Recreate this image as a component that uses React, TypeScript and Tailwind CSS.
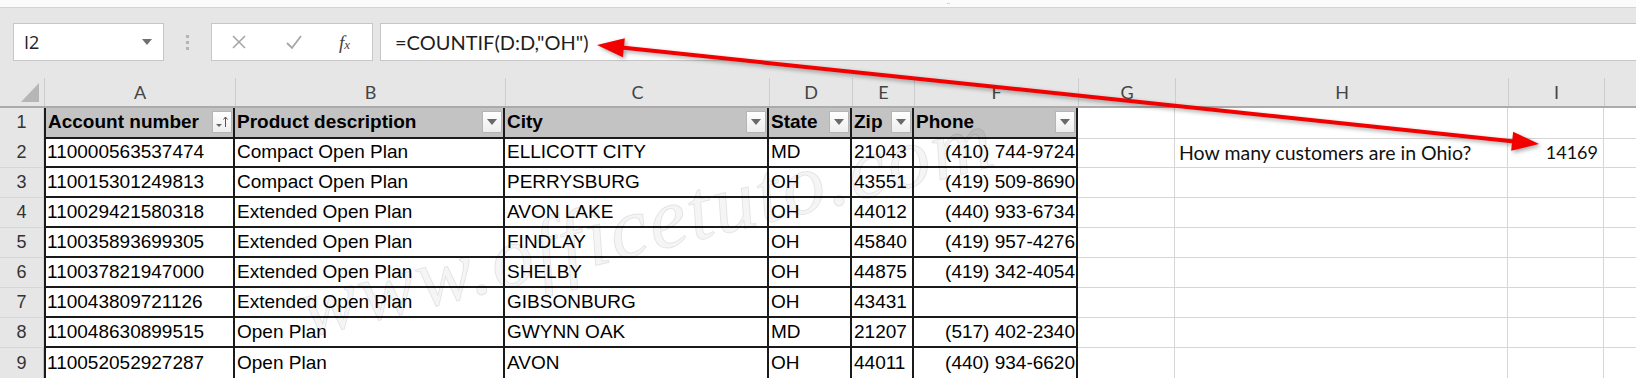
import React from 'react'

const cols = ['', 'A', 'B', 'C', 'D', 'E', 'F', 'G', 'H', 'I', '']

const headers = ['Account number', 'Product description', 'City', 'State', 'Zip', 'Phone']

const rows = [
  ['110000563537474', 'Compact Open Plan', 'ELLICOTT CITY', 'MD', '21043', '(410) 744-9724'],
  ['110015301249813', 'Compact Open Plan', 'PERRYSBURG', 'OH', '43551', '(419) 509-8690'],
  ['110029421580318', 'Extended Open Plan', 'AVON LAKE', 'OH', '44012', '(440) 933-6734'],
  ['110035893699305', 'Extended Open Plan', 'FINDLAY', 'OH', '45840', '(419) 957-4276'],
  ['110037821947000', 'Extended Open Plan', 'SHELBY', 'OH', '44875', '(419) 342-4054'],
  ['110043809721126', 'Extended Open Plan', 'GIBSONBURG', 'OH', '43431', ''],
  ['110048630899515', 'Open Plan', 'GWYNN OAK', 'MD', '21207', '(517) 402-2340'],
  ['110052052927287', 'Open Plan', 'AVON', 'OH', '44011', '(440) 934-6620'],
]

const gridCols = 'grid grid-cols-[44px_191px_270px_264px_83px_62px_164px_97px_333px_96px_1fr]'

function FilterButton({ sorted }: { sorted?: boolean }) {
  return (
    <span className="mr-[1px] flex h-[22px] w-[20px] shrink-0 items-center justify-center border border-[#b5b5b5] bg-gradient-to-b from-white to-[#eeeeee]">
      {sorted ? (
        <svg width="14" height="14" viewBox="0 0 14 14">
          <path d="M1 9h6l-3 3z" fill="#666" />
          <path d="M10.5 2v10" stroke="#555" strokeWidth="1" />
          <path d="M8.5 4.5l2-2.5 2 2.5" stroke="#555" strokeWidth="1" fill="none" />
        </svg>
      ) : (
        <svg width="10" height="6" viewBox="0 0 10 6">
          <path d="M0 0h10L5 6z" fill="#6a6a6a" />
        </svg>
      )}
    </span>
  )
}

function Toolbar() {
  return (
    <div className="font-['Open_Sans',sans-serif]">
      <div className="relative h-[8px] border-b border-[#d4d4d4] bg-[#fbfbfb]">
        <span className="absolute left-[946px] top-[1px] text-[8px] leading-none text-[#444]">¨</span>
      </div>
      <div className="flex h-[70px] items-start bg-[#e6e6e6] pl-[13px] pt-[15px]">
        <div className="flex h-[38px] w-[151px] items-center justify-between border border-[#c6c6c6] bg-white pl-[10px] pr-[11px]">
          <span className="text-[18px] text-[#222]">I2</span>
          <svg width="10" height="6" viewBox="0 0 10 6">
            <path d="M0 0h10L5 6z" fill="#707070" />
          </svg>
        </div>
        <div className="flex h-[38px] w-[47px] flex-col items-center justify-center gap-[3px]">
          <span className="h-[3px] w-[3px] bg-[#b4b4b4]" />
          <span className="h-[3px] w-[3px] bg-[#b4b4b4]" />
          <span className="h-[3px] w-[3px] bg-[#b4b4b4]" />
        </div>
        <div className="flex h-[38px] w-[162px] items-center border border-[#c6c6c6] bg-white">
          <svg className="ml-[19px]" width="16" height="16" viewBox="0 0 16 16">
            <path d="M2 2l12 12M14 2L2 14" stroke="#a6a6a6" strokeWidth="1.6" />
          </svg>
          <svg className="ml-[38px]" width="18" height="16" viewBox="0 0 18 16">
            <path d="M2 9l5 5L16 2" stroke="#a6a6a6" strokeWidth="1.8" fill="none" />
          </svg>
          <span className="ml-[36px] font-['Liberation_Serif',serif] text-[19px] italic leading-none text-[#444]">
            f<span className="text-[13px]">x</span>
          </span>
        </div>
        <div className="ml-[7px] flex h-[38px] flex-1 items-center border-y border-l border-[#c6c6c6] bg-white pl-[14px]">
          <span className="font-['Lato',sans-serif] text-[20px] text-[#1e1e1e]">=COUNTIF(D:D,"OH")</span>
        </div>
      </div>
    </div>
  )
}

function ColumnHeaders() {
  return (
    <div className={`${gridCols} h-[30px] border-b-2 border-[#ababab] bg-[#e6e6e6] font-['Lato',sans-serif] text-[18px] text-[#444]`}>
      {cols.map((c, i) => (
        <div
          key={i}
          className={i === 0 ? 'relative' : 'flex items-center justify-center border-l border-[#cdcdcd]'}
        >
          {i === 0 ? (
            <svg className="absolute left-0 top-0" width="44" height="28" viewBox="0 0 44 28">
              <path d="M39 5v19H21z" fill="#b6b6b6" />
            </svg>
          ) : (
            c
          )}
        </div>
      ))}
    </div>
  )
}

function RowHeader({ n, last }: { n: number; last?: boolean }) {
  return (
    <div
      className={`flex items-center justify-center border-r border-[#c2c2c2] bg-[#e6e6e6] font-['Liberation_Sans',sans-serif] text-[18px] text-[#333] ${last ? '' : 'border-b border-[#d6d6d6]'}`}
    >
      {n}
    </div>
  )
}

function Grid() {
  return (
    <div className="font-['Liberation_Sans',Arial,sans-serif] text-[19px] text-black">
      {/* table header row */}
      <div className={`${gridCols} h-[30px]`}>
        <RowHeader n={1} />
        {headers.map((h, i) => (
          <div
            key={h}
            className={`flex items-center justify-between border-b-2 border-r-2 border-[#1a1a1a] bg-[#c3c3c3] pl-[2px] font-bold ${i === 0 ? 'border-l-2' : ''}`}
          >
            <span>{h}</span>
            <FilterButton sorted={i === 0} />
          </div>
        ))}
        <div className="border-b border-r border-[#d6d6d6]" />
        <div className="border-b border-r border-[#d6d6d6]" />
        <div className="border-b border-r border-[#d6d6d6]" />
        <div className="border-b border-[#d6d6d6]" />
      </div>

      {rows.map((r, ri) => {
        const last = ri === rows.length - 1
        const b = last ? '' : 'border-b-2'
        return (
          <div key={ri} className={`${gridCols} h-[30px]`}>
            <RowHeader n={ri + 2} last={last} />
            {r.map((v, ci) => (
              <div
                key={ci}
                className={`flex items-center overflow-hidden whitespace-nowrap border-r-2 border-[#1a1a1a] ${b} ${
                  ci === 0 ? 'border-l-2 pl-[1px]' : 'pl-[2px]'
                } ${ci === 5 ? 'justify-end pr-[1px]' : ''}`}
              >
                {v}
              </div>
            ))}
            <div className={`border-r border-[#d6d6d6] ${last ? '' : 'border-b'}`} />
            <div
              className={`flex items-center whitespace-nowrap border-r border-[#d6d6d6] pl-[4px] font-['Lato',sans-serif] text-[19.5px] text-[#111] ${last ? '' : 'border-b'}`}
            >
              {ri === 0 ? 'How many customers are in Ohio?' : ''}
            </div>
            <div
              className={`flex items-center justify-end border-r border-[#d6d6d6] pr-[5px] font-['Lato',sans-serif] text-[18px] text-[#111] ${last ? '' : 'border-b'}`}
            >
              {ri === 0 ? '14169' : ''}
            </div>
            <div className={last ? '' : 'border-b border-[#d6d6d6]'} />
          </div>
        )
      })}
    </div>
  )
}

function head(tx: number, ty: number, ang: number, len = 27, w = 19) {
  const bx = tx - len * Math.cos(ang)
  const by = ty - len * Math.sin(ang)
  const nx = -Math.sin(ang) * (w / 2)
  const ny = Math.cos(ang) * (w / 2)
  return `${tx},${ty} ${bx + nx},${by + ny} ${bx - nx},${by - ny}`
}

function Arrow() {
  const x1 = 597
  const y1 = 45
  const x2 = 1539
  const y2 = 144
  const a = Math.atan2(y2 - y1, x2 - x1)
  return (
    <svg
      className="pointer-events-none absolute left-0 top-0 drop-shadow-[2px_2px_2px_rgba(0,0,0,0.35)]"
      width="1636"
      height="385"
      viewBox="0 0 1636 385"
    >
      <line
        x1={x1 + 20 * Math.cos(a)}
        y1={y1 + 20 * Math.sin(a)}
        x2={x2 - 20 * Math.cos(a)}
        y2={y2 - 20 * Math.sin(a)}
        stroke="#f20000"
        strokeWidth="4"
      />
      <polygon points={head(x1, y1, a + Math.PI)} fill="#f20000" />
      <polygon points={head(x2, y2, a)} fill="#f20000" />
    </svg>
  )
}

export default function App() {
  return (
    <div className="relative h-[385px] w-[1636px] overflow-hidden bg-white">
      <Toolbar />
      <ColumnHeaders />
      <Grid />
      {/* watermark */}
      <div className="pointer-events-none absolute left-[290px] top-[180px] -rotate-[14deg] whitespace-nowrap font-['Liberation_Serif',serif] text-[86px] italic leading-none tracking-[2px] text-black/[0.04] [-webkit-text-stroke:1px_rgba(0,0,0,0.09)]">
        www.officetuto.com
      </div>
      <Arrow />
    </div>
  )
}
